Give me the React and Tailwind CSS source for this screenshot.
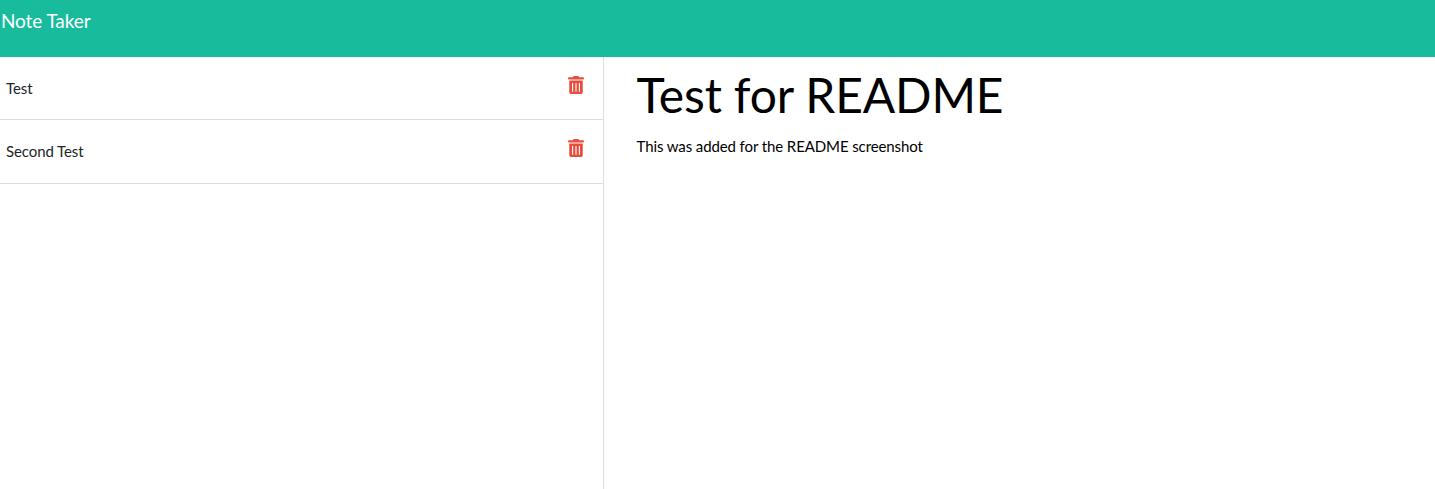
import { FaTrashAlt } from 'react-icons/fa';

const notes = ['Test', 'Second Test'];

export default function App() {
  return (
    <div className="h-[489px] overflow-hidden bg-white font-['Lato','Open_Sans',sans-serif] text-[15px] leading-[22.5px] text-[#212529]">
      <nav className="h-[57px] bg-[#18bc9c] pl-px pt-[9px]">
        <a className="block text-[19px] leading-[24px] tracking-[-0.1px] text-white">Note Taker</a>
      </nav>
      <div className="flex h-[432px]">
        <aside className="w-[604px] shrink-0 border-r border-[#dedede]">
          <ul>
            {notes.map((note) => (
              <li key={note} className="flex h-[64px] justify-between border-b border-[#dedede] pl-1.5 pr-[18px] pt-5 first:h-[63px]">
                <span className="tracking-[-0.1px]">{note}</span>
                <FaTrashAlt className="-mt-[1px] text-[18px] text-[#e74c3c]" />
              </li>
            ))}
          </ul>
        </aside>
        <main className="flex-1 pl-[32.5px] pt-[7px] text-black">
          <h1 className="text-[48px] leading-[62px] tracking-[-0.15px]">Test for README</h1>
          <p className="mt-[9px] tracking-[-0.1px]">This was added for the README screenshot</p>
        </main>
      </div>
    </div>
  );
}
